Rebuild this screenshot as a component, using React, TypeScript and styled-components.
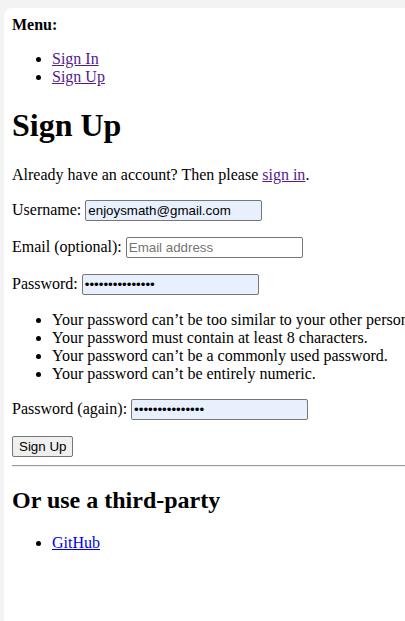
import React from "react";
import styled, { createGlobalStyle } from "styled-components";

const Global = createGlobalStyle`
  html, body {
    margin: 0;
    padding: 0;
    overflow: hidden;
    background: #f3f3f3;
  }
  body {
    font-family: "Liberation Serif", "Times New Roman", serif;
    font-size: 16px;
    color: #000;
  }
`;

const Panel = styled.div`
  margin: 8px 0 0 4px;
  width: 900px;
  min-height: 640px;
  background: #fff;
  border-radius: 8px 0 0 0;
  padding: 8px;
  box-sizing: border-box;
`;

const MenuTitle = styled.strong`
  display: block;
  font-weight: bold;
  line-height: normal;
`;

const Para = styled.p`
  margin: 16px 0;
  line-height: normal;
`;

const List = styled.ul`
  margin: 16px 0;
  padding-left: 40px;
  list-style: disc;
`;

const Item = styled.li`
  line-height: normal;
`;

const Link = styled.a<{ $visited?: boolean }>`
  color: ${(p) => (p.$visited ? "#551a8b" : "#0000ee")};
  text-decoration: underline;
  cursor: pointer;
`;

const Title = styled.h1`
  font-size: 32px;
  font-weight: bold;
  margin: 21.44px 0;
`;

const SubTitle = styled.h2`
  font-size: 24px;
  font-weight: bold;
  margin: 19.92px 0;
`;

const Field = styled.input<{ $filled?: boolean }>`
  box-sizing: border-box;
  font-family: "Liberation Sans", Arial, sans-serif;
  font-size: 13.333px;
  width: 177px;
  height: 21px;
  padding: 1px 2px;
  border: 1px solid #767676;
  border-radius: 2px;
  background: ${(p) => (p.$filled ? "#e8f0fe" : "#fff")};
  color: #000;
  outline: none;
  vertical-align: baseline;
  &::placeholder {
    color: #757575;
  }
`;

const Button = styled.button`
  box-sizing: border-box;
  height: 21px;
  font-family: "Liberation Sans", Arial, sans-serif;
  font-size: 13.333px;
  padding: 1px 6px;
  border: 1px solid #767676;
  border-radius: 2px;
  background: #efefef;
  color: #000;
`;

const Rule = styled.hr`
  margin: 8px 0;
  border: 0;
  border-top: 1px solid #9a9a9a;
  border-bottom: 1px solid #eeeeee;
`;

const helpTexts = [
  "Your password can’t be too similar to your other personal information.",
  "Your password must contain at least 8 characters.",
  "Your password can’t be a commonly used password.",
  "Your password can’t be entirely numeric.",
];

export default function App() {
  return (
    <>
      <Global />
      <Panel>
        <MenuTitle>Menu:</MenuTitle>
        <List>
          <Item>
            <Link $visited>Sign In</Link>
          </Item>
          <Item>
            <Link $visited>Sign Up</Link>
          </Item>
        </List>
        <Title>Sign Up</Title>
        <Para>
          Already have an account? Then please <Link $visited>sign in</Link>.
        </Para>
        <form onSubmit={(e) => e.preventDefault()}>
          <Para>
            <label>Username:</label>{" "}
            <Field $filled type="text" defaultValue="enjoysmath@gmail.com" />
          </Para>
          <Para>
            <label>Email (optional):</label>{" "}
            <Field type="email" placeholder="Email address" />
          </Para>
          <Para>
            <label>Password:</label>{" "}
            <Field $filled type="password" defaultValue="abcdefghijklmno" />
          </Para>
          <List>
            {helpTexts.map((t) => (
              <Item key={t}>{t}</Item>
            ))}
          </List>
          <Para>
            <label>Password (again):</label>{" "}
            <Field $filled type="password" defaultValue="abcdefghijklmno" />
          </Para>
          <Button type="submit">Sign Up</Button>
        </form>
        <Rule />
        <SubTitle>Or use a third-party</SubTitle>
        <List>
          <Item>
            <Link>GitHub</Link>
          </Item>
        </List>
      </Panel>
    </>
  );
}
